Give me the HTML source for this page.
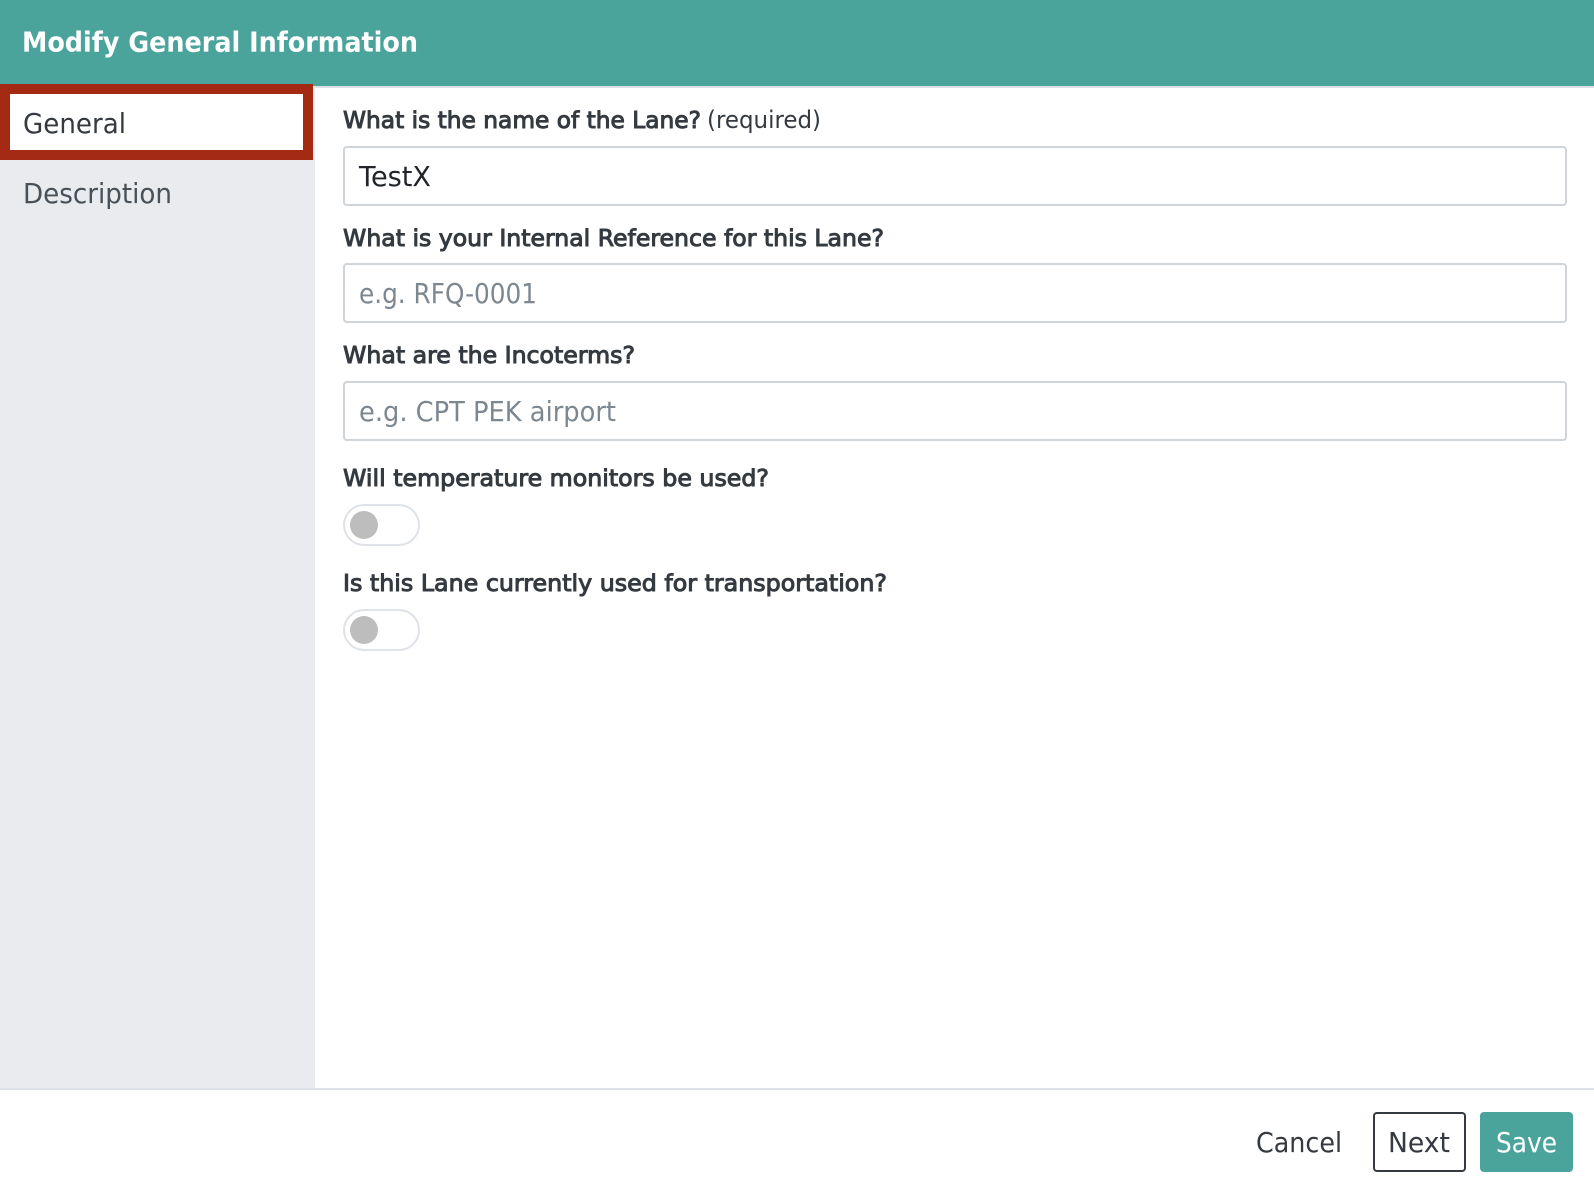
<!DOCTYPE html>
<html lang="en">
<head>
<meta charset="utf-8">
<title>Modify General Information</title>
<style>
html,body{margin:0;padding:0;background:#fff;width:1594px;height:1194px;overflow:hidden}
.b{position:absolute;box-sizing:border-box}
svg{position:absolute;left:0;top:0}
text{font-family:"DejaVu Sans","Liberation Sans",sans-serif;fill:#343a40}
.r{font-size:28px}
.l{font-size:23.5px;font-family:"DejaVu Sans","Liberation Sans",sans-serif;fill:#343a40;stroke:#343a40;stroke-width:1px}
.p{font-size:28px;fill:#7d8790}
.inp{left:343px;width:1224px;height:60px;border:2px solid #cfd4d8;border-radius:4px;background:#fff}
.tg{left:343px;width:77px;height:42px;border:2px solid #dfe3e8;border-radius:21px;background:#fff}
.kn{left:350px;width:28px;height:28px;border-radius:50%;background:#bdbdbd}
</style>
</head>
<body>
<div class="b" style="left:0;top:0;width:1594px;height:88px;background:#dee2e6"></div>
<div class="b" style="left:0;top:0;width:1594px;height:86px;background:#4ba49c"></div>
<div class="b" style="left:0;top:86px;width:315px;height:1002px;background:#e9ebef"></div>
<div class="b" style="left:315px;top:88px;width:1279px;height:1000px;background:#fff"></div>
<div class="b" style="left:0;top:84px;width:313px;height:76px;background:#fff;border:10px solid #a52a14"></div>
<div class="b" style="left:0;top:1088px;width:1594px;height:2px;background:#dee2e6"></div>

<div class="b inp" style="top:146px"></div>
<div class="b inp" style="top:263px"></div>
<div class="b inp" style="top:381px"></div>
<div class="b tg" style="top:504px"></div>
<div class="b kn" style="top:511px"></div>
<div class="b tg" style="top:609px"></div>
<div class="b kn" style="top:616px"></div>

<div class="b" style="left:1373px;top:1112px;width:93px;height:60px;border:2px solid #343a40;border-radius:4px;background:#fff"></div>
<div class="b" style="left:1480px;top:1112px;width:93px;height:60px;border-radius:4px;background:#4ba49c"></div>

<svg width="1594" height="1194" viewBox="0 0 1594 1194" xmlns="http://www.w3.org/2000/svg">
<text x="22" y="51.5" textLength="396" lengthAdjust="spacingAndGlyphs" style="font-size:28px;font-weight:700;fill:#fff">Modify General Information</text>
<text class="r" x="23" y="133" textLength="103" lengthAdjust="spacingAndGlyphs">General</text>
<text class="r" x="23" y="203" textLength="149" lengthAdjust="spacingAndGlyphs" style="fill:#495057">Description</text>

<text class="l" x="343" y="128" textLength="358" lengthAdjust="spacingAndGlyphs">What is the name of the Lane?</text>
<text x="707" y="128" textLength="114" lengthAdjust="spacingAndGlyphs" style="font-size:24px">(required)</text>
<text class="r" x="359" y="186" textLength="72" lengthAdjust="spacingAndGlyphs" style="fill:#212529">TestX</text>

<text class="l" x="343" y="246" textLength="541" lengthAdjust="spacingAndGlyphs">What is your Internal Reference for this Lane?</text>
<text class="p" x="359" y="303" textLength="178" lengthAdjust="spacingAndGlyphs">e.g. RFQ-0001</text>

<text class="l" x="343" y="363" textLength="292" lengthAdjust="spacingAndGlyphs">What are the Incoterms?</text>
<text class="p" x="359" y="421" textLength="257" lengthAdjust="spacingAndGlyphs">e.g. CPT PEK airport</text>

<text class="l" x="343" y="486" textLength="426" lengthAdjust="spacingAndGlyphs">Will temperature monitors be used?</text>
<text class="l" x="343" y="591" textLength="544" lengthAdjust="spacingAndGlyphs">Is this Lane currently used for transportation?</text>

<text class="r" x="1256" y="1152" textLength="86" lengthAdjust="spacingAndGlyphs">Cancel</text>
<text class="r" x="1388" y="1152" textLength="62" lengthAdjust="spacingAndGlyphs">Next</text>
<text class="r" x="1496" y="1152" textLength="61" lengthAdjust="spacingAndGlyphs" style="fill:#fff">Save</text>
</svg>
</body>
</html>
